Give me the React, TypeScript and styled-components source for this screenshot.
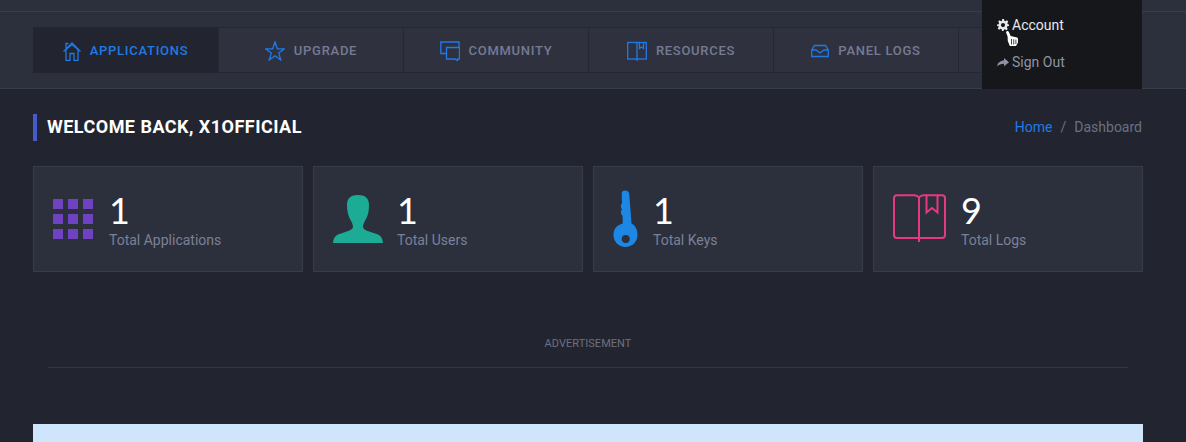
import React from 'react';
import styled, { createGlobalStyle } from 'styled-components';

const GlobalStyle = createGlobalStyle`
  html, body {
    margin: 0;
    padding: 0;
    height: 442px;
    overflow: hidden;
    background-color: #222530;
    font-family: Roboto, "Liberation Sans", sans-serif;
  }
  * {
    box-sizing: border-box;
  }
`;

const Page = styled.div`
  position: relative;
  height: 442px;
  overflow: hidden;
`;

const TopStrip = styled.div`
  height: 12px;
  background-color: #2c303c;
  border-bottom: 1px solid #383c49;
`;

const NavBand = styled.div`
  height: 77px;
  padding: 15px 44px 15px 33px;
  background-color: #2c303c;
  border-bottom: 1px solid #383c49;
`;

const NavList = styled.nav`
  display: grid;
  grid-template-columns: repeat(6, 185px);
  height: 46px;
  background-color: #2f323e;
  border-top: 1px solid #252833;
  border-bottom: 1px solid #252833;
`;

const NavItem = styled.a<{ $active?: boolean }>`
  display: flex;
  align-items: center;
  justify-content: center;
  gap: 9px;
  padding-top: 1px;
  margin: ${p => (p.$active ? '-1px 0' : '0')};
  background-color: ${p => (p.$active ? '#222530' : 'transparent')};
  border-left: ${p => (p.$active ? 'none' : '1px solid #252833')};
  color: ${p => (p.$active ? '#1f7ae6' : '#757a94')};
  font-size: 13px;
  font-weight: 500;
  letter-spacing: 0.72px;
  text-transform: uppercase;
`;

const NavIcon = styled.svg<{ $width: number }>`
  width: ${p => p.$width}px;
  height: 20px;
  fill: none;
  stroke: #1f7ae6;
  stroke-width: 1.3;
  flex-shrink: 0;
`;

const AccountMenu = styled.div`
  position: absolute;
  top: 0;
  left: 982px;
  width: 160px;
  height: 89px;
  padding: 15px 15px 0;
  background-color: #16171b;
  display: flex;
  flex-direction: column;
  gap: 17px;
`;

const MenuLink = styled.a<{ $hover?: boolean }>`
  display: flex;
  align-items: center;
  gap: 3px;
  height: 20px;
  font-size: 14px;
  color: ${p => (p.$hover ? '#e8e9ee' : '#8f93a6')};
`;

const MenuIcon = styled.svg`
  width: 12px;
  height: 12px;
  fill: currentColor;
  flex-shrink: 0;
`;

const Pointer = styled.svg`
  position: absolute;
  left: 24px;
  top: 31px;
  width: 12px;
  height: 15px;
`;

const Content = styled.main`
  padding: 25px 43px 0 33px;
`;

const HeaderRow = styled.div`
  display: flex;
  align-items: center;
  justify-content: space-between;
  height: 27px;
`;

const PageTitle = styled.h1`
  margin: 0;
  padding: 0 0 2px 10px;
  border-left: 4px solid #4659cf;
  font-size: 18px;
  line-height: 25px;
  font-weight: 700;
  letter-spacing: 0.48px;
  color: #ffffff;
  text-transform: uppercase;
`;

const Breadcrumb = styled.div`
  display: flex;
  gap: 8px;
  padding: 0 1px 2px 0;
  font-size: 14px;
  color: #6c7080;
`;

const CrumbLink = styled.a`
  color: #1f7ae6;
`;

const CardGrid = styled.div`
  display: grid;
  grid-template-columns: repeat(4, 270px);
  gap: 10px;
  margin-top: 25px;
`;

const StatCard = styled.div`
  display: flex;
  align-items: center;
  height: 106px;
  padding-left: 19px;
  background-color: #2c303c;
  border: 1px solid #383c49;
`;

const IconSlot = styled.div<{ $width: number }>`
  width: ${p => p.$width}px;
  display: flex;
  flex-shrink: 0;
`;

const StatBody = styled.div`
  display: flex;
  flex-direction: column;
  padding-top: 2px;
`;

const StatValue = styled.div`
  font-family: Lato, "Open Sans", sans-serif;
  font-size: 36px;
  line-height: 40px;
  color: #ffffff;
`;

const StatLabel = styled.div`
  font-size: 14px;
  line-height: 20px;
  color: #7a8099;
`;

const AdBlock = styled.section`
  margin: 63px 15px 0;
  border-bottom: 1px solid #343743;
  height: 33px;
  text-align: center;
  font-size: 11px;
  line-height: 18px;
  letter-spacing: 0.05px;
  color: #6c7080;
  text-transform: uppercase;
`;

const InfoBanner = styled.div`
  margin-top: 56px;
  height: 60px;
  background-color: #cfe5fc;
`;

const tabs = [
  {
    label: 'Applications',
    active: true,
    width: 18,
    icon: (
      <>
        <path d="M.5 10.500 9 2 17.500 10.500" />
        <path d="M3 8.500 9 3.500 15 8.500" />
        <path d="M3 8.500V19.500H7V12.500H11V19.500H15V8.500" />
        <path d="M3 7V2.500H5.500" />
      </>
    ),
  },
  {
    label: 'Upgrade',
    width: 20,
    icon: <path d="M10 1 12.300 7.800H19.500L13.700 12.100 15.800 19 10 14.800 4.200 19 6.300 12.100.5 7.800H7.700Z" />,
  },
  {
    label: 'Community',
    width: 20,
    icon: (
      <>
        <path d="M6 12.500H.8V1H19V6.500" />
        <path d="M6.500 6.500H19.500V18H17.500V20L15 18H6.500Z" />
      </>
    ),
  },
  {
    label: 'Resources',
    width: 20,
    icon: (
      <>
        <rect x=".7" y="1.500" width="18.600" height="16.500" />
        <path d="M10 1.500V20" />
        <path d="M12.500 1.500V7.500L14.500 6 16.500 7.500V1.500" />
      </>
    ),
  },
  {
    label: 'Panel Logs',
    width: 18,
    icon: (
      <>
        <path d="M3.500 4.500H14.500L17.300 9V15.500H.7V9Z" />
        <path d="M.7 9H5L9 12 13 9H17.300" />
      </>
    ),
  },
];

const GridIcon = () => (
  <svg width="41" height="42" viewBox="0 0 41 42" fill="#6f42c1">
    {[0, 15, 30].map(y =>
      [0, 15, 30].map(x => <rect key={`${x}-${y}`} x={x} y={y + 1} width="10" height="10" />),
    )}
  </svg>
);

const UserIcon = () => (
  <svg width="50" height="50" viewBox="0 0 50 50" fill="#1cac96">
    <path d="M25 1C18 1 14 4 14 11C14 17 15 21 17 25C18.500 28 20 30 20 33C20 36 14 37.500 8 39.500C3 41 0.500 43 0 49H50C49.500 43 47 41 42 39.500C36 37.500 30 36 30 33C30 30 31.500 28 33 25C35 21 36 17 36 11C36 4 32 1 25 1Z" />
  </svg>
);

const KeyIcon = () => (
  <svg width="26" height="58" viewBox="0 0 26 58" fill="#1c87e5">
    <path
      fillRule="evenodd"
      d="M8.700 3.500C8.700 1.500 10 .5 12 .5C14 .5 16 1.500 16.200 3.500L18.500 33.500C22 35 24.500 39.500 24.500 45C24.500 52 19 57 12.500 57C6 57 .5 52 .5 45C.5 39.500 3.500 35 9.800 33.500L9.500 25.500C7.500 24.500 7.500 20.500 9.200 19.500C7.500 18 7.500 14.500 9 13.500L8.700 3.500ZM12.700 45A4 4 0 1 0 12.700 53A4 4 0 1 0 12.700 45Z"
    />
  </svg>
);

const BookIcon = () => (
  <svg width="54" height="50" viewBox="0 0 54 50" fill="none" stroke="#e6397f" strokeWidth="2">
    <path d="M26 3.500C24.500 1.500 23.500 1.200 21.500 1.200H4C2 1.200 1 2.200 1 4.200V41C1 43 2 44 4 44H49C51 44 52 43 52 41V4.200C52 2.200 51 1.200 49 1.200H30.500C28.500 1.200 27.500 1.500 26 3.500Z" />
    <path d="M26 3.500V48" />
    <path d="M33.500 1.200V18.500L39 14 44.500 18.500V1.200" />
  </svg>
);

const stats = [
  { value: '1', label: 'Total Applications', slot: 56, Icon: GridIcon },
  { value: '1', label: 'Total Users', slot: 64, Icon: UserIcon },
  { value: '1', label: 'Total Keys', slot: 40, Icon: KeyIcon },
  { value: '9', label: 'Total Logs', slot: 68, Icon: BookIcon },
];

export default function App() {
  return (
    <Page>
      <GlobalStyle />
      <TopStrip />
      <NavBand>
        <NavList>
          {tabs.map(tab => (
            <NavItem key={tab.label} $active={tab.active}>
              <NavIcon $width={tab.width} viewBox={`0 0 ${tab.width} 20`}>
                {tab.icon}
              </NavIcon>
              {tab.label}
            </NavItem>
          ))}
          <NavItem />
        </NavList>
      </NavBand>

      <AccountMenu>
        <MenuLink $hover>
          <MenuIcon viewBox="0 0 24 24">
            <path
              fillRule="evenodd"
              d="M10 0h4l.7 3.400 2.200.9L19.800 2.400l2.800 2.800-1.900 2.900.9 2.200L24 11v3l-3.400.7-.9 2.200 1.900 2.900-2.800 2.800-2.900-1.900-2.200.9L13 24h-3l-.7-3.400-2.200-.9-2.900 1.900-2.800-2.800 1.900-2.900-.9-2.200L0 14v-3l3.400-.7.9-2.200L2.400 5.200l2.800-2.800 2.900 1.900 2.200-.9ZM12 8a4.200 4.200 0 1 0 0 8.400A4.200 4.200 0 0 0 12 8Z"
            />
          </MenuIcon>
          Account
        </MenuLink>
        <MenuLink>
          <MenuIcon viewBox="0 0 24 24">
            <path d="M14 4l10 8.500-10 8v-5C8 15.500 3.500 17 0 21c1-7 6-11.500 14-12.500Z" />
          </MenuIcon>
          Sign Out
        </MenuLink>
        <Pointer viewBox="0 0 12 15">
          <path
            d="M0 1.200C.4-.2 2.400-.2 2.900 1L4.600 5 11 6.500C11.700 6.700 12 7.300 12 8V11.500L10 15H3.800L1.800 10 1.600 5.500Z"
            fill="#ffffff"
          />
          <path d="M5.500 8v5.500M7.700 8.300v5.200M9.900 8.600v4.400" stroke="#16171b" strokeWidth="0.800" />
        </Pointer>
      </AccountMenu>

      <Content>
        <HeaderRow>
          <PageTitle>Welcome back, x1official</PageTitle>
          <Breadcrumb>
            <CrumbLink>Home</CrumbLink>
            <span>/</span>
            <span>Dashboard</span>
          </Breadcrumb>
        </HeaderRow>

        <CardGrid>
          {stats.map(({ value, label, slot, Icon }) => (
            <StatCard key={label}>
              <IconSlot $width={slot}>
                <Icon />
              </IconSlot>
              <StatBody>
                <StatValue>{value}</StatValue>
                <StatLabel>{label}</StatLabel>
              </StatBody>
            </StatCard>
          ))}
        </CardGrid>

        <AdBlock>Advertisement</AdBlock>
        <InfoBanner />
      </Content>
    </Page>
  );
}
